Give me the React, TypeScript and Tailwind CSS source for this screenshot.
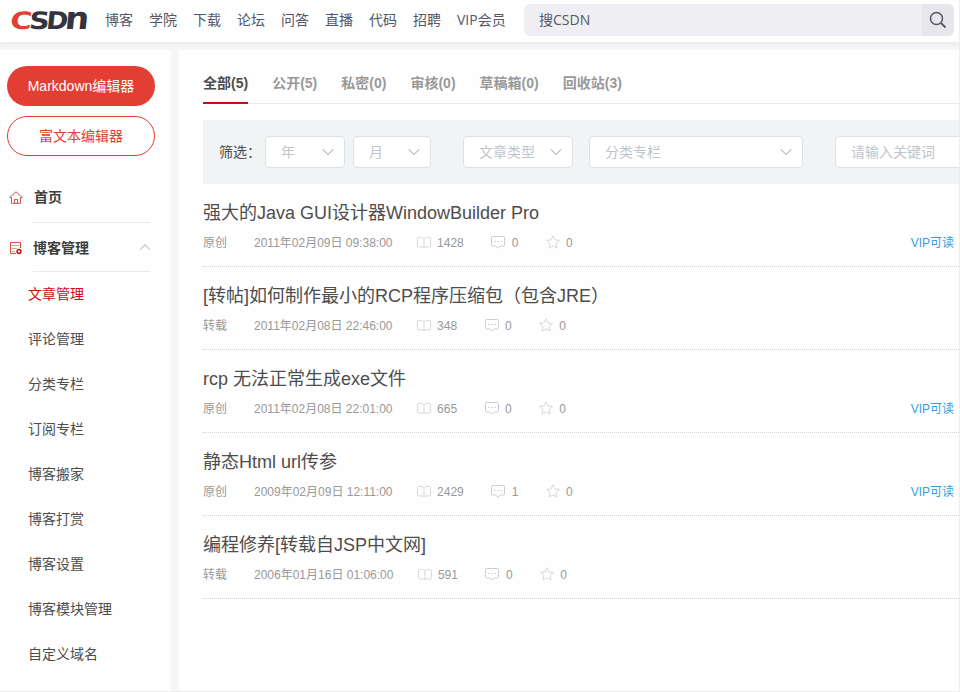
import { ChevronDown, ChevronUp } from "lucide-react";

interface Article {
  title: string;
  type: string;
  date: string;
  views: number;
  comments: number;
  stars: number;
  vip: boolean;
}

const navItems = ["博客", "学院", "下载", "论坛", "问答", "直播", "代码", "招聘", "VIP会员"];

const menuItems = [
  "文章管理",
  "评论管理",
  "分类专栏",
  "订阅专栏",
  "博客搬家",
  "博客打赏",
  "博客设置",
  "博客模块管理",
  "自定义域名",
];

const tabs = [
  { name: "全部", count: 5 },
  { name: "公开", count: 5 },
  { name: "私密", count: 0 },
  { name: "审核", count: 0 },
  { name: "草稿箱", count: 0 },
  { name: "回收站", count: 3 },
];

const articles: Article[] = [
  {
    title: "强大的Java GUI设计器WindowBuilder Pro",
    type: "原创",
    date: "2011年02月09日 09:38:00",
    views: 1428,
    comments: 0,
    stars: 0,
    vip: true,
  },
  {
    title: "[转帖]如何制作最小的RCP程序压缩包（包含JRE）",
    type: "转载",
    date: "2011年02月08日 22:46:00",
    views: 348,
    comments: 0,
    stars: 0,
    vip: false,
  },
  {
    title: "rcp 无法正常生成exe文件",
    type: "原创",
    date: "2011年02月08日 22:01:00",
    views: 665,
    comments: 0,
    stars: 0,
    vip: true,
  },
  {
    title: "静态Html url传参",
    type: "原创",
    date: "2009年02月09日 12:11:00",
    views: 2429,
    comments: 1,
    stars: 0,
    vip: true,
  },
  {
    title: "编程修养[转载自JSP中文网]",
    type: "转载",
    date: "2006年01月16日 01:06:00",
    views: 591,
    comments: 0,
    stars: 0,
    vip: false,
  },
];

function Logo() {
  return (
    <svg
      width="80"
      height="40"
      viewBox="0 0 80 40"
      overflow="visible"
      className="shrink-0 font-['DejaVu_Sans',sans-serif] font-bold"
    >
      <text transform="translate(-0.5 28.5) skewX(-6) scale(1.24 1)" fontSize="24" fill="#e33e33">C</text>
      <text transform="translate(18.5 28.5) skewX(-6) scale(1.18 1)" fontSize="24" fill="#34333e">S</text>
      <text transform="translate(35.5 28.5) skewX(-6) scale(1.08 1)" fontSize="24.5" fill="#34333e">D</text>
      <text transform="translate(54 28.5) skewX(-6) scale(1.1 1)" fontSize="31" fill="#34333e">n</text>
    </svg>
  );
}

function SearchIcon() {
  return (
    <svg width="18" height="18" viewBox="0 0 18 18" fill="none" stroke="#555666" strokeWidth="1.5">
      <circle cx="7.5" cy="7.5" r="6" />
      <path d="M12 12l4.500 4.500" strokeWidth="1.8" />
    </svg>
  );
}

function HomeIcon() {
  return (
    <svg width="14" height="13" viewBox="0 0 14 13" fill="none" stroke="#c8564f" strokeLinejoin="round">
      <path d="M2.5 6.5H.7L7 .8l6.3 5.7h-1.800v5.800h-9z" />
      <path d="M5.5 12V8.5h3V12" />
    </svg>
  );
}

function BlogIcon() {
  return (
    <svg width="12" height="13" viewBox="0 0 12 13" fill="none" stroke="#dc4a43">
      <path d="M6 11.5H.5V.5h10V6" />
      <path d="M2 3.5h7M2 6.5h5M2 9.5h3" stroke="#ea9b90" />
      <circle cx="9" cy="9.5" r="1.9" stroke="#ca0c16" strokeWidth="1.5" />
    </svg>
  );
}

function BookIcon() {
  return (
    <svg width="14" height="12" viewBox="0 0 14 12" fill="none" stroke="#d8d8dc">
      <path d="M7 2C6.2 1 5.2.5 3.8.5H1.6C1 .5.5 1 .5 1.6v7.3c0 .6.4 1 1 1h3.3c1 0 1.7.2 2.2.8.5-.6 1.2-.8 2.2-.8h3.300c.6 0 1-.4 1-1V1.600C13.500 1 13 .5 12.400.5h-2.200C8.800.5 7.800 1 7 2zM7 2v8.800" />
    </svg>
  );
}

function CommentIcon() {
  return (
    <svg
      width="14"
      height="13"
      viewBox="0 0 14 13"
      fill="none"
      stroke="#cfcbd4"
      className="mb-[2px]"
    >
      <path d="M1.600.5h10.800c.6 0 1.100.5 1.100 1.100v7.300c0 .6-.5 1.100-1.100 1.100H9.200L7 12.200 4.800 10H1.600C1 10 .5 9.500.5 8.900V1.600C.5 1 1 .5 1.600.5z" />
      <path d="M3 5.500h1.500M6.200 5.500h1.500M9.400 5.500h1.500" />
    </svg>
  );
}

function StarIcon() {
  return (
    <svg
      width="14"
      height="14"
      viewBox="0 0 14 14"
      fill="none"
      stroke="#d8d8dc"
      strokeLinejoin="round"
      className="mb-[2px]"
    >
      <path d="M7 .8l1.900 4.100 4.500.5-3.300 3.100.9 4.500L7 10.800 3 13l.9-4.500L.6 5.400l4.500-.5z" />
    </svg>
  );
}

function Select({ label, className }: { label: string; className: string }) {
  return (
    <div
      className={`flex h-8 shrink-0 items-center justify-between rounded border border-[#dcdfe6] bg-white pr-[6px] pl-[15px] text-[#c0c4cc] ${className}`}
    >
      <span>{label}</span>
      <ChevronDown size={20} strokeWidth={1.3} />
    </div>
  );
}

function ArticleRow({ article }: { article: Article }) {
  return (
    <div className="h-[83px] border-b border-dotted border-[#d4d4d4] pt-4">
      <h3 className="h-[26px] text-[18px] leading-[26px] text-[#4d4d4d]">{article.title}</h3>
      <div className="mt-2 flex h-[18px] items-center pr-[5px] text-xs leading-[18px] text-[#999]">
        <span className="w-[51px]">{article.type}</span>
        <span>{article.date}</span>
        <span className="ml-[24.5px] flex items-center gap-[6px]">
          <BookIcon />
          {article.views}
        </span>
        <span className="ml-[27.5px] flex items-center gap-[6.5px]">
          <CommentIcon />
          {article.comments}
        </span>
        <span className="ml-[27.5px] flex items-center gap-[6px]">
          <StarIcon />
          {article.stars}
        </span>
        {article.vip && <span className="ml-auto text-[#349edf]">VIP可读</span>}
      </div>
    </div>
  );
}

export default function App() {
  return (
    <div className="flex h-[692px] w-[960px] flex-col overflow-hidden border-r border-b border-[#ededee] bg-[#f4f6f8] font-['Liberation_Sans','Noto_Sans_CJK_SC',sans-serif] text-sm text-[#4d4d4d]">
      <header className="z-10 flex h-[42px] shrink-0 items-center bg-[#fefefe] pr-[5px] pb-[2px] pl-[10px] font-['Open_Sans','Noto_Sans_CJK_SC',sans-serif] shadow-[0_2px_5px_rgba(0,0,0,0.05)]">
        <Logo />
        <nav className="ml-[15px] flex gap-4 whitespace-nowrap text-[#555666]">
          {navItems.map((item) => (
            <a key={item}>{item}</a>
          ))}
        </nav>
        <div className="ml-auto flex h-8 w-[430px] shrink-0 items-center justify-between overflow-hidden rounded-md bg-[#eeeef3]">
          <span className="pl-[15px] text-[#555666]">搜CSDN</span>
          <button className="flex h-8 w-8 items-center justify-center bg-[#e6e6eb]">
            <SearchIcon />
          </button>
        </div>
      </header>

      <div className="flex min-h-0 flex-1 pt-2">
        <aside className="w-[171px] shrink-0 bg-[#fefefe] pt-4 pl-[7px]">
          <button className="block h-10 w-[148px] rounded-full bg-[#e33e33] text-white">Markdown编辑器</button>
          <button className="mt-[10px] block h-10 w-[148px] rounded-full border border-[#e33e33] text-[#e33e33]">
            富文本编辑器
          </button>

          <div className="mt-[17px] flex h-12 items-center pl-[2px] font-bold text-[#3d3d3d]">
            <HomeIcon />
            <span className="ml-[11px]">首页</span>
          </div>
          <div className="ml-[26px] mt-px h-px w-[117px] bg-[#eaeaec]" />
          <div className="flex h-12 items-center pt-[2px] pl-[3px] font-bold text-[#3d3d3d]">
            <BlogIcon />
            <span className="ml-[11px]">博客管理</span>
            <ChevronUp size={18} strokeWidth={1.2} className="mr-[17px] mb-[3px] ml-auto text-[#999]" />
          </div>
          <div className="ml-[26px] h-px w-[117px] bg-[#eaeaec]" />
          <ul className="pl-[21px]">
            {menuItems.map((item, index) => (
              <li key={item} className={`h-[45px] leading-[45px] ${index === 0 ? "text-[#ca0c16]" : ""}`}>
                {item}
              </li>
            ))}
          </ul>
        </aside>

        <main className="ml-2 min-w-0 flex-1 overflow-hidden bg-[#fefefe] pt-[13px] pl-6">
          <div className="flex h-[41px] gap-6 border-b border-[#e8e8ed] font-bold text-[#999]">
            {tabs.map((tab, index) => (
              <div
                key={tab.name}
                className={`h-[41px] leading-[40px] whitespace-nowrap ${
                  index === 0 ? "border-b-2 border-[#ca0c16] text-[#4d4d4d]" : ""
                }`}
              >
                {tab.name}({tab.count})
              </div>
            ))}
          </div>

          <div className="mt-4 flex h-16 items-center overflow-hidden bg-[#f0f4f5] pl-4">
            <span className="w-[46px] shrink-0 whitespace-nowrap">筛选：</span>
            <Select label="年" className="w-20" />
            <Select label="月" className="ml-2 w-[78px]" />
            <Select label="文章类型" className="ml-8 w-[110px]" />
            <Select label="分类专栏" className="ml-4 w-[214px]" />
            <div className="ml-8 flex h-8 w-[180px] shrink-0 items-center rounded border border-[#dcdfe6] bg-white pl-[15px] text-[#c0c4cc]">
              请输入关键词
            </div>
          </div>

          {articles.map((article) => (
            <ArticleRow key={article.title} article={article} />
          ))}
        </main>
      </div>
    </div>
  );
}
